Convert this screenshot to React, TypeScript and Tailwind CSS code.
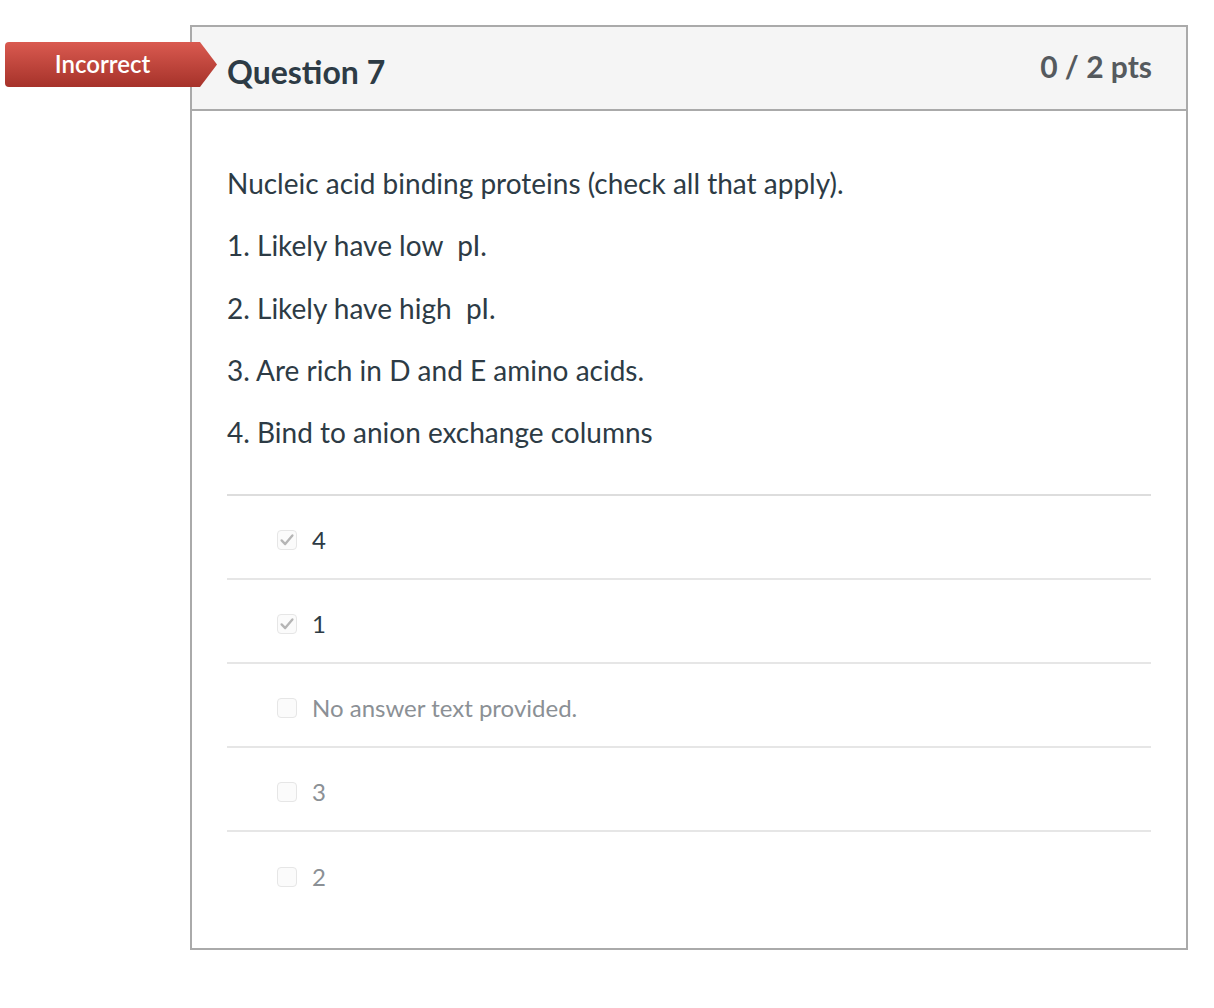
import React from 'react';

type Answer = { label: string; checked: boolean };

const answers: Answer[] = [
  { label: '4', checked: true },
  { label: '1', checked: true },
  { label: 'No answer text provided.', checked: false },
  { label: '3', checked: false },
  { label: '2', checked: false },
];

const Checkbox: React.FC<{ checked: boolean }> = ({ checked }) => (
  <span className="flex items-center justify-center w-[20px] h-[20px] rounded-[4px] border border-[#e6e6e6] bg-[#fbfbfb] shrink-0">
    {checked && (
      <svg viewBox="0 0 20 20" className="w-[18px] h-[18px]">
        <path d="M4 10.5 L8 14.5 L16 5" fill="none" stroke="#b5b5b5" strokeWidth="2.6" strokeLinecap="round" strokeLinejoin="round" />
      </svg>
    )}
  </span>
);

const App: React.FC = () => {
  return (
    <div className="min-h-[1008px] bg-white pt-[25px] pl-[190px] pr-[26px] font-['Lato','Inter','Liberation_Sans',sans-serif] text-[#2d3b45]">
      <div className="relative border-2 border-[#aaaaaa] h-[925px]">
        {/* status badge */}
        <div className="absolute left-[-187px] top-[15px] h-[45px] w-[212px] pr-[17px] flex items-center justify-center rounded-l-[4px] bg-gradient-to-b from-[#da5a50] to-[#a6322a] [clip-path:polygon(0_0,195px_0,212px_50%,195px_100%,0_100%)]">
          <span className="text-white text-[24px] font-semibold -mt-[2px]">Incorrect</span>
        </div>

        <div className="flex items-start justify-between h-[84px] bg-[#f5f5f5] border-b-2 border-[#aaaaaa] pl-[35px] pr-[34px]">
          <h2 className="mt-[29px] text-[32px] font-bold leading-none">Question 7</h2>
          <span className="mt-[24px] text-[30px] font-bold leading-none text-[#555a5e]">0 / 2 pts</span>
        </div>

        <div className="px-[35px] pt-[56px]">
          <div className="text-[28px] leading-[32px] flex flex-col gap-[30.3px] pb-[46px]">
            <p>Nucleic acid binding proteins (check all that apply).</p>
            <p>1. Likely have low&nbsp; pI.</p>
            <p>2. Likely have high&nbsp; pI.</p>
            <p>3. Are rich in D and E amino acids.</p>
            <p>4. Bind to anion exchange columns</p>
          </div>

          <div className="border-t-2 border-[#dddddd]">
            {answers.map((a, i) => (
              <div
                key={i}
                className={`flex items-center gap-[15px] h-[84px] pl-[50px] pt-[6px] ${i < answers.length - 1 ? 'border-b-2 border-[#e6e6e6]' : ''}`}
              >
                <Checkbox checked={a.checked} />
                <span className={`text-[24px] ${a.checked ? 'text-[#2d3b45]' : 'text-[#8b9095]'}`}>{a.label}</span>
              </div>
            ))}
          </div>
        </div>
      </div>
    </div>
  );
};

export default App;
